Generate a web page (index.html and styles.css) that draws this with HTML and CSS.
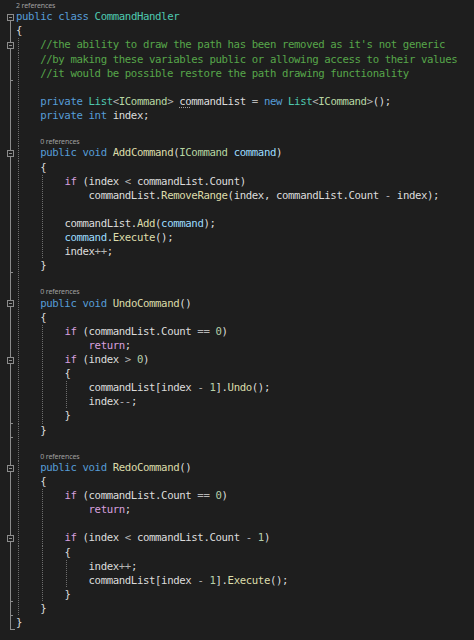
FILE: index.html
```html
<!DOCTYPE html>
<html lang="en">
<head>
<meta charset="utf-8">
<title>CommandHandler</title>
<link rel="stylesheet" href="styles.css">
</head>
<body>
<div class="editor">
  <div class="cl"><span class="g"></span><span class="txt">2 references</span></div>
  <div class="ln"><span class="g first box"></span><span class="c"><span class="kw">public</span> <span class="kw">class</span> <span class="ty">CommandHandler</span></span></div>
  <div class="ln"><span class="g v"></span><span class="c">{</span></div>
  <div class="ln"><span class="g v box"></span><span class="i d"></span><span class="c cm">//the ability to draw the path has been removed as it's not generic</span></div>
  <div class="ln"><span class="g v"></span><span class="i d"></span><span class="c cm">//by making these variables public or allowing access to their values</span></div>
  <div class="ln"><span class="g v tick"></span><span class="i d"></span><span class="c cm">//it would be possible restore the path drawing functionality</span></div>
  <div class="ln"><span class="g v"></span><span class="i d"></span></div>
  <div class="ln"><span class="g v"></span><span class="i d"></span><span class="c"><span class="kw">private</span> <span class="ty">List</span><span class="op">&lt;</span><span class="it">ICommand</span><span class="op">&gt;</span> <span class="sug">co</span>mmandList <span class="op">=</span> <span class="kw">new</span> <span class="ty">List</span><span class="op">&lt;</span><span class="it">ICommand</span><span class="op">&gt;</span>();</span></div>
  <div class="ln"><span class="g v"></span><span class="i d"></span><span class="c"><span class="kw">private</span> <span class="kw">int</span> index;</span></div>
  <div class="ln"><span class="g v"></span><span class="i d"></span></div>
  <div class="cl"><span class="g v"></span><span class="i d"></span><span class="txt">0 references</span></div>
  <div class="ln"><span class="g v box"></span><span class="i d"></span><span class="c"><span class="kw">public</span> <span class="kw">void</span> <span class="fn">AddCommand</span>(<span class="it">ICommand</span> <span class="pm">command</span>)</span></div>
  <div class="ln"><span class="g v"></span><span class="i d"></span><span class="c">{</span></div>
  <div class="ln"><span class="g v"></span><span class="i d"></span><span class="i d"></span><span class="c"><span class="ctl">if</span> (index <span class="op">&lt;</span> commandList.Count)</span></div>
  <div class="ln"><span class="g v"></span><span class="i d"></span><span class="i d"></span><span class="i"></span><span class="c">commandList.<span class="fn">RemoveRange</span>(index, commandList.Count <span class="op">-</span> index);</span></div>
  <div class="ln"><span class="g v"></span><span class="i d"></span><span class="i d"></span></div>
  <div class="ln"><span class="g v"></span><span class="i d"></span><span class="i d"></span><span class="c">commandList.<span class="fn">Add</span>(<span class="pm">command</span>);</span></div>
  <div class="ln"><span class="g v"></span><span class="i d"></span><span class="i d"></span><span class="c"><span class="pm">command</span>.<span class="fn">Execute</span>();</span></div>
  <div class="ln"><span class="g v"></span><span class="i d"></span><span class="i d"></span><span class="c">index<span class="op">++</span>;</span></div>
  <div class="ln"><span class="g v tick"></span><span class="i d"></span><span class="c">}</span></div>
  <div class="ln"><span class="g v"></span><span class="i d"></span></div>
  <div class="cl"><span class="g v"></span><span class="i d"></span><span class="txt">0 references</span></div>
  <div class="ln"><span class="g v box"></span><span class="i d"></span><span class="c"><span class="kw">public</span> <span class="kw">void</span> <span class="fn">UndoCommand</span>()</span></div>
  <div class="ln"><span class="g v"></span><span class="i d"></span><span class="c">{</span></div>
  <div class="ln"><span class="g v"></span><span class="i d"></span><span class="i d"></span><span class="c"><span class="ctl">if</span> (commandList.Count <span class="op">==</span> <span class="num">0</span>)</span></div>
  <div class="ln"><span class="g v"></span><span class="i d"></span><span class="i d"></span><span class="i"></span><span class="c"><span class="ctl">return</span>;</span></div>
  <div class="ln"><span class="g v box"></span><span class="i d"></span><span class="i d"></span><span class="c"><span class="ctl">if</span> (index <span class="op">&gt;</span> <span class="num">0</span>)</span></div>
  <div class="ln"><span class="g v"></span><span class="i d"></span><span class="i d"></span><span class="c">{</span></div>
  <div class="ln"><span class="g v"></span><span class="i d"></span><span class="i d"></span><span class="i d"></span><span class="c">commandList[index <span class="op">-</span> <span class="num">1</span>].<span class="fn">Undo</span>();</span></div>
  <div class="ln"><span class="g v"></span><span class="i d"></span><span class="i d"></span><span class="i d"></span><span class="c">index<span class="op">--</span>;</span></div>
  <div class="ln"><span class="g v tick"></span><span class="i d"></span><span class="i d"></span><span class="c">}</span></div>
  <div class="ln"><span class="g v tick"></span><span class="i d"></span><span class="c">}</span></div>
  <div class="ln"><span class="g v"></span><span class="i d"></span></div>
  <div class="cl"><span class="g v"></span><span class="i d"></span><span class="txt">0 references</span></div>
  <div class="ln"><span class="g v box"></span><span class="i d"></span><span class="c"><span class="kw">public</span> <span class="kw">void</span> <span class="fn">RedoCommand</span>()</span></div>
  <div class="ln"><span class="g v"></span><span class="i d"></span><span class="c">{</span></div>
  <div class="ln"><span class="g v"></span><span class="i d"></span><span class="i d"></span><span class="c"><span class="ctl">if</span> (commandList.Count <span class="op">==</span> <span class="num">0</span>)</span></div>
  <div class="ln"><span class="g v"></span><span class="i d"></span><span class="i d"></span><span class="i"></span><span class="c"><span class="ctl">return</span>;</span></div>
  <div class="ln"><span class="g v"></span><span class="i d"></span><span class="i d"></span></div>
  <div class="ln"><span class="g v box"></span><span class="i d"></span><span class="i d"></span><span class="c"><span class="ctl">if</span> (index <span class="op">&lt;</span> commandList.Count <span class="op">-</span> <span class="num">1</span>)</span></div>
  <div class="ln"><span class="g v"></span><span class="i d"></span><span class="i d"></span><span class="c">{</span></div>
  <div class="ln"><span class="g v"></span><span class="i d"></span><span class="i d"></span><span class="i d"></span><span class="c">index<span class="op">++</span>;</span></div>
  <div class="ln"><span class="g v"></span><span class="i d"></span><span class="i d"></span><span class="i d"></span><span class="c">commandList[index <span class="op">-</span> <span class="num">1</span>].<span class="fn">Execute</span>();</span></div>
  <div class="ln"><span class="g v tick"></span><span class="i d"></span><span class="i d"></span><span class="c">}</span></div>
  <div class="ln"><span class="g v tick"></span><span class="i d"></span><span class="c">}</span></div>
  <div class="ln"><span class="g end"></span><span class="c">}</span></div>
</div>
</body>
</html>
```

FILE: styles.css
```css
html, body {
  margin: 0;
  background: #1e1e1e;
}

.editor {
  padding-top: 1px;
  font-family: "DejaVu Sans Mono", monospace;
  font-size: 10.7px;
  letter-spacing: -0.39px;
  color: #dcdcdc;
}

.ln {
  display: flex;
  height: 14.1px;
  line-height: 14.1px;
  white-space: pre;
}

.cl {
  display: flex;
  height: 9.3px;
}

.cl .txt {
  font-family: "Noto Sans", sans-serif;
  font-size: 7px;
  letter-spacing: -0.1px;
  line-height: 9.3px;
  color: #a0a0a0;
  white-space: pre;
}

.c {
  white-space: pre;
}

/* gutter / outlining margin */
.g {
  flex: none;
  width: 16px;
  position: relative;
}

.g.v::before {
  content: "";
  position: absolute;
  left: 10px;
  top: 0;
  bottom: 0;
  width: 1px;
  background: #8c8c8c;
}

.g.first::before {
  content: "";
  position: absolute;
  left: 10px;
  top: 50%;
  bottom: 0;
  width: 1px;
  background: #8c8c8c;
}

.g.box::after {
  content: "";
  position: absolute;
  left: 7px;
  top: calc(50% - 3.5px);
  width: 5px;
  height: 5px;
  border: 1px solid #8c8c8c;
  background: linear-gradient(#8c8c8c, #8c8c8c) center / 3px 1px no-repeat, #1e1e1e;
}

.g.tick::after {
  content: "";
  position: absolute;
  left: 10px;
  bottom: 0;
  width: 3px;
  height: 1px;
  background: #8c8c8c;
}

.g.end::before {
  content: "";
  position: absolute;
  left: 10px;
  top: 0;
  bottom: 0;
  width: 5px;
  border-left: 1px solid #8c8c8c;
  border-bottom: 1px solid #8c8c8c;
  box-sizing: border-box;
}

/* indentation with dotted guides */
.i {
  flex: none;
  width: 24.2px;
}

.i.d {
  background: linear-gradient(#6e6e6e 50%, transparent 50%) 2px 0 / 1px 2px repeat-y;
}

/* syntax colours */
.kw { color: #569cd6; }
.ty { color: #4ec9b0; }
.it { color: #b8d7a3; }
.fn { color: #dcdcaa; }
.cm { color: #57a64a; }
.ctl { color: #d8a0df; }
.pm { color: #9cdcfe; }
.num { color: #b5cea8; }
.op { color: #b4b4b4; }

.sug {
  text-decoration: underline dotted #9a9a9a;
  text-underline-offset: 2px;
}
```
